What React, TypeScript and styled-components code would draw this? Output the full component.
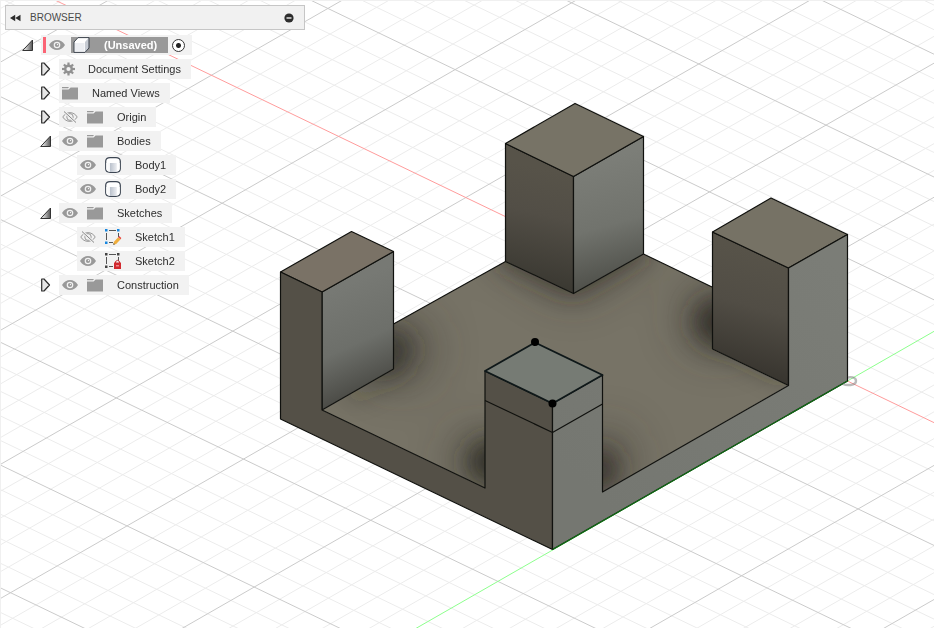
import React, { useState } from "react";
import styled, { createGlobalStyle } from "styled-components";

const GlobalStyle = createGlobalStyle`
  body {
    margin: 0;
    background: #ffffff;
    font-family: "Liberation Sans", Arial, sans-serif;
    font-size: 11px;
    color: #2e2e2e;
  }
  button, input { font: inherit; color: inherit; }
`;

const Workspace = styled.main`
  display: grid;
  height: 100vh;
  box-sizing: border-box;
  border-top: 1px solid #f0f0f0;
  border-left: 1px solid #f0f0f0;
  overflow: hidden;
`;

const Canvas = styled.svg`
  grid-area: 1 / 1;
  width: 100%;
  height: 100%;
  min-height: 0;
  display: block;
`;

const BrowserPanel = styled.aside`
  grid-area: 1 / 1;
  z-index: 1;
  justify-self: start;
  align-self: start;
  width: 300px;
  padding: 4px;
`;

const PanelHeader = styled.header`
  display: flex;
  align-items: center;
  gap: 9px;
  height: 23px;
  padding: 0 10px 0 4px;
  border: 1px solid #c6c6c6;
  background: #f1f1f1;
`;

const PanelTitle = styled.h1`
  flex: 1;
  margin: 0;
  font-size: 10px;
  font-weight: 400;
  color: #4a4a4a;
`;

const IconButton = styled.button`
  display: inline-flex;
  align-items: center;
  flex: none;
  margin: 0;
  padding: 0;
  border: 0;
  background: none;
  cursor: pointer;
`;

const Twisty = styled(IconButton)`
  width: 19px;
`;

const TwistySpace = styled.span`
  flex: none;
  width: 19px;
`;

const Tree = styled.ul<{ $nested?: boolean }>`
  display: flex;
  flex-direction: column;
  gap: 4px;
  margin: ${(p) => (p.$nested ? "4px 0 0 18px" : "5px 0 0 17px")};
  padding: 0;
  list-style: none;
`;

const Row = styled.div`
  display: flex;
  height: 20px;
`;

const Chip = styled.div<{ $root?: boolean }>`
  display: flex;
  align-items: center;
  padding: ${(p) => (p.$root ? "0 7px 0 2px" : "0 10px 0 3px")};
  background: #f2f2f2;
  white-space: nowrap;
`;

const ActiveBar = styled.span`
  width: 3px;
  height: 16px;
  margin-right: 3px;
  background: #fb6475;
`;

const EyeButton = styled(IconButton)`
  width: 25px;
`;

const Label = styled.span<{ $gap: number }>`
  margin-left: ${(p) => p.$gap}px;
`;

const RootLabel = styled.span`
  display: flex;
  align-items: center;
  gap: 14px;
  height: 16px;
  margin: 0 4px 0 -3px;
  padding: 0 11px 0 2px;
  background: #999999;
  color: #ffffff;
  font-weight: 700;
`;

const ActivateRadio = styled.input`
  appearance: none;
  box-sizing: border-box;
  width: 13px;
  height: 13px;
  margin: 0;
  border: 1px solid #333333;
  border-radius: 50%;
  background: radial-gradient(circle, #222222 2px, #ffffff 3px);
`;

function TwistyIcon({ open }: { open: boolean }) {
  return (
    <svg width="12" height="14" viewBox="0 0 12 14" aria-hidden="true">
      <defs>
        <linearGradient id="twistyOpen" x1="0" x2="1">
          <stop offset="0.2" stopColor="#e5e5e5" />
          <stop offset="1" stopColor="#555555" />
        </linearGradient>
      </defs>
      {open ? (
        <path d="M0.7 12.5 L10.5 2 V12.5 Z" fill="url(#twistyOpen)" stroke="#333" />
      ) : (
        <path d="M1.7 1 V13 H4 L9.5 7 L4 1 Z" fill="#e6e6e6" stroke="#2d2d2d" strokeWidth="1.2" strokeLinejoin="round" />
      )}
    </svg>
  );
}

function EyeIcon({ hidden }: { hidden?: boolean }) {
  return (
    <svg width="16" height="12" viewBox="0 0 16 12" aria-hidden="true">
      {hidden ? (
        <g fill="none" stroke="#999999">
          <path d="M0.8 6 C4 0.2 12 0.2 15.2 6 C12 11.8 4 11.8 0.8 6 Z" />
          <ellipse cx="8" cy="6" rx="3.2" ry="3.4" />
          <path d="M2 0.5 L14 11.5" stroke="#f2f2f2" strokeWidth="2.4" />
          <path d="M2 0.5 L14 11.5" stroke="#888888" />
        </g>
      ) : (
        <>
          <path d="M0 6 C4 -0.6 12 -0.6 16 6 C12 12.6 4 12.6 0 6 Z" fill="#999999" />
          <circle cx="8" cy="6" r="3.3" fill="#f2f2f2" />
          <circle cx="8" cy="6" r="2.1" fill="#999999" />
          <circle cx="8.5" cy="5.5" r="0.7" fill="#f2f2f2" />
        </>
      )}
    </svg>
  );
}

function FolderIcon() {
  return (
    <svg width="16" height="14" viewBox="0 0 16 14" aria-hidden="true">
      <path d="M0 1 H7 L6 2.2 H0 Z" fill="#999999" />
      <path d="M0 3.4 H6.6 L8.6 1.6 H16 V13.4 H0 Z" fill="#999999" />
    </svg>
  );
}

const teeth = [0, 45, 90, 135, 180, 225, 270, 315];

function GearIcon() {
  return (
    <svg width="13" height="14" viewBox="0 0 13 14" aria-hidden="true">
      <g fill="#919191">
        {teeth.map((a) => (
          <rect key={a} x="5.4" y="0.5" width="2.2" height="3.5" transform={`rotate(${a} 6.5 7)`} />
        ))}
      </g>
      <circle cx="6.5" cy="7" r="3.3" fill="none" stroke="#919191" strokeWidth="2.4" />
    </svg>
  );
}

function CubeIcon() {
  return (
    <svg width="17" height="16" viewBox="0 0 17 16" aria-hidden="true">
      <path d="M1 5 L5 0.6 H16 V11 L12 15.4 H1 Z" fill="#ffffff" />
      <path d="M12 5 L16 0.6 V11 L12 15.4 Z" fill="#c5cad2" />
      <path d="M2 6 H11.5 V14.5 H2 Z" fill="#eceef2" />
      <path d="M1 5 L5 0.6 H16 V11 L12 15.4 H1 Z" fill="none" stroke="#3d444e" strokeLinejoin="round" />
    </svg>
  );
}

function BodyIcon() {
  return (
    <svg width="16" height="16" viewBox="0 0 16 16" aria-hidden="true">
      <defs>
        <linearGradient id="bodyFill" x1="0" x2="1">
          <stop offset="0" stopColor="#ffffff" />
          <stop offset="0.28" stopColor="#f4f5f7" />
          <stop offset="0.3" stopColor="#bcc3cd" />
          <stop offset="0.75" stopColor="#e8eaee" />
          <stop offset="0.8" stopColor="#ffffff" />
        </linearGradient>
      </defs>
      <path
        d="M0.7 4 Q1 0.7 5 0.7 H11 Q15 0.7 15.3 4 V12 Q15 15.3 11 15.3 H5 Q1 15.3 0.7 12 Z"
        fill="#ffffff"
        stroke="#3d4653"
        strokeWidth="1.2"
      />
      <path d="M1.3 6 H14.7 V12 Q14 14.5 11 14.7 H5 Q1.8 14.5 1.3 12 Z" fill="url(#bodyFill)" />
    </svg>
  );
}

function SketchIcon({ locked }: { locked?: boolean }) {
  const node = locked ? "#444444" : "#1787e0";
  return (
    <svg width="17" height="16" viewBox="0 0 17 16" aria-hidden="true">
      <path d="M4 1.5 H11 M13.5 4 V8 M1.5 4 V11 M4 13.5 H8" fill="none" stroke="#555555" />
      <g fill={node}>
        <rect x="0" y="0" width="2.5" height="2.5" />
        <rect x="12" y="0" width="2.5" height="2.5" />
        <rect x="0" y="12.5" width="2.5" height="2.5" />
      </g>
      {locked ? (
        <>
          <path d="M10.5 10 V8.5 Q12.5 6.2 14.5 8.5 V10" fill="none" stroke="#c5262c" />
          <rect x="9" y="9.5" width="7" height="6.5" fill="#d2292f" />
          <path d="M11 12 H14 V13.5 H11 Z" fill="#f08589" />
        </>
      ) : (
        <>
          <path d="M8.2 15.8 L9 12.8 L13.2 8.2 L15.6 10.2 L11.2 15 Z" fill="#f0ae3c" />
          <path d="M13.2 8.2 L14.2 7 L16.3 9 L15.6 10.2 Z" fill="#e8413c" />
          <path d="M8.2 15.8 L8.7 14 L10 15.4 Z" fill="#555" />
        </>
      )}
    </svg>
  );
}

type Node = {
  name: string;
  icon: React.ReactNode;
  gap: number;
  eye?: "on" | "off";
  branch?: boolean;
  children?: Node[];
};

const nodes: Node[] = [
  { name: "Document Settings", icon: <GearIcon />, gap: 13, branch: true },
  { name: "Named Views", icon: <FolderIcon />, gap: 14, branch: true },
  { name: "Origin", icon: <FolderIcon />, gap: 14, eye: "off", branch: true },
  {
    name: "Bodies", icon: <FolderIcon />, gap: 14, eye: "on", branch: true,
    children: [
      { name: "Body1", icon: <BodyIcon />, gap: 14, eye: "on" },
      { name: "Body2", icon: <BodyIcon />, gap: 14, eye: "on" },
    ],
  },
  {
    name: "Sketches", icon: <FolderIcon />, gap: 14, eye: "on", branch: true,
    children: [
      { name: "Sketch1", icon: <SketchIcon />, gap: 13, eye: "off" },
      { name: "Sketch2", icon: <SketchIcon locked />, gap: 13, eye: "on" },
    ],
  },
  { name: "Construction", icon: <FolderIcon />, gap: 14, eye: "on", branch: true },
];

function TreeNode({ node }: { node: Node }) {
  const [open, setOpen] = useState(!!node.children);
  const [shown, setShown] = useState(node.eye === "on");
  return (
    <li>
      <Row>
        {node.branch ? (
          <Twisty aria-label={`Expand ${node.name}`} aria-expanded={open} onClick={() => setOpen(!open)}>
            <TwistyIcon open={open} />
          </Twisty>
        ) : (
          <TwistySpace />
        )}
        <Chip>
          {node.eye && (
            <EyeButton aria-label={`Show ${node.name}`} aria-pressed={shown} onClick={() => setShown(!shown)}>
              <EyeIcon hidden={!shown} />
            </EyeButton>
          )}
          {node.icon}
          <Label $gap={node.gap}>{node.name}</Label>
        </Chip>
      </Row>
      {open && node.children && (
        <Tree $nested>
          {node.children.map((c) => <TreeNode key={c.name} node={c} />)}
        </Tree>
      )}
    </li>
  );
}

// Ground plane: the origin and the two vectors that span one major cell.
const ORIGIN = [847.4, 381];
const U = [127.2, 61.15];
const V = [116.5, -66.8];
const DIVISIONS = 5;

function gridLine(i: number, along: number[], across: number[]) {
  const t = i / DIVISIONS;
  const x = ORIGIN[0] + across[0] * t;
  const y = ORIGIN[1] + across[1] * t;
  return `M${x - along[0] * 16} ${y - along[1] * 16}L${x + along[0] * 16} ${y + along[1] * 16}`;
}

const indices = Array.from({ length: 121 }, (_, i) => i - 60);
const isMajor = (i: number) => i % DIVISIONS === 0;
const linesFor = (list: number[]) => list.map((i) => gridLine(i, U, V) + gridLine(i, V, U)).join("");
const MINOR = linesFor(indices.filter((i) => !isMajor(i)));
const MAJOR = linesFor(indices.filter((i) => isMajor(i) && i !== 0));

const FLOOR = "393.5,324 505.5,261.5 573.5,293.5 643.5,254 712,287 712,349 788,385.5 603,492 603,375 485,371 485,488 322,410 393.5,369";

function Model() {
  return (
    <Canvas viewBox="1 1 933 627" preserveAspectRatio="xMidYMid slice" role="img" aria-label="Model view">
      <defs>
        <clipPath id="floorClip"><polygon points={FLOOR} /></clipPath>
        <filter id="soft" x="-80%" y="-80%" width="260%" height="260%"><feGaussianBlur stdDeviation="12" /></filter>
        <filter id="wide" x="-100%" y="-100%" width="300%" height="300%"><feGaussianBlur stdDeviation="24" /></filter>
        <linearGradient id="leftInner" gradientUnits="userSpaceOnUse" x1="335" y1="290" x2="378" y2="385">
          <stop offset="0" stopColor="#777974" />
          <stop offset="0.55" stopColor="#6d6f6a" />
          <stop offset="1" stopColor="#4b4b46" />
        </linearGradient>
        <linearGradient id="backLeft" gradientUnits="userSpaceOnUse" x1="550" y1="170" x2="525" y2="280">
          <stop offset="0" stopColor="#575349" />
          <stop offset="0.4" stopColor="#524e46" />
          <stop offset="1" stopColor="#3b3932" />
        </linearGradient>
        <linearGradient id="backRight" gradientUnits="userSpaceOnUse" x1="600" y1="160" x2="632" y2="274">
          <stop offset="0" stopColor="#7c7e78" />
          <stop offset="0.55" stopColor="#71736d" />
          <stop offset="1" stopColor="#51524c" />
        </linearGradient>
        <linearGradient id="rightLeft" gradientUnits="userSpaceOnUse" x1="765" y1="255" x2="733" y2="368">
          <stop offset="0" stopColor="#575349" />
          <stop offset="0.45" stopColor="#514d45" />
          <stop offset="1" stopColor="#38352f" />
        </linearGradient>
        <linearGradient id="frontRight" gradientUnits="userSpaceOnUse" x1="600" y1="500" x2="820" y2="250">
          <stop offset="0" stopColor="#757771" />
          <stop offset="1" stopColor="#7b7d77" />
        </linearGradient>
      </defs>

      <path d={MINOR} stroke="#ececec" fill="none" />
      <path d={MAJOR} stroke="#cbcbcb" fill="none" />
      <path d={gridLine(0, U, V)} stroke="#ff9c9c" />
      <path d={gridLine(0, V, U)} stroke="#8dff8d" />

      <polygon points={FLOOR} fill="#777366" />
      <g clipPath="url(#floorClip)" fill="#2e2b25">
        <g filter="url(#wide)" opacity="0.4">
          <ellipse cx="400" cy="350" rx="34" ry="34" />
          <path d="M480 240 L573 300 L665 240Z" />
          <ellipse cx="718" cy="318" rx="36" ry="34" />
          <ellipse cx="485" cy="460" rx="34" ry="28" />
          <ellipse cx="603" cy="460" rx="30" ry="30" />
        </g>
        <g filter="url(#soft)">
          <ellipse cx="390" cy="350" rx="22" ry="20" opacity="0.75" />
          <path d="M345 392 L393 362 L406 372 L350 398Z" opacity="0.5" />
          <path d="M500 262 L573 295 L645 254 L645 238 L500 238Z" opacity="0.65" />
          <ellipse cx="718" cy="322" rx="24" ry="23" opacity="0.85" />
          <path d="M708 342 L790 382 L790 360 L715 320Z" opacity="0.5" />
          <ellipse cx="492" cy="462" rx="24" ry="22" opacity="0.9" />
          <ellipse cx="600" cy="470" rx="18" ry="22" opacity="0.8" />
        </g>
      </g>

      <g stroke="#10110e" strokeWidth="1.2" strokeLinejoin="round">
        <polyline points="393.5,324 505.5,261.5" />
        <polyline points="643.5,254 712,287" />

        <polygon points="505.5,143.5 573.5,176.5 573.5,293.5 505.5,261.5" fill="url(#backLeft)" />
        <polygon points="573.5,176.5 643.5,136.5 643.5,254 573.5,293.5" fill="url(#backRight)" />
        <polygon points="505.5,143.5 575,103.5 643.5,136.5 573.5,176.5" fill="#777366" />

        <polygon points="712.5,232 788.5,268 788.5,385.5 712.5,349" fill="url(#rightLeft)" />
        <polygon points="712.5,232 771,198 847.5,234.5 788.5,268" fill="#767265" />

        <polygon points="322,292 393.5,251.5 393.5,369 322,410" fill="url(#leftInner)" />
        <polygon points="280.5,272 351.5,231.5 393.5,251.5 322,292" fill="#7a7266" />

        <polygon
          points="280.5,272 322,292 322,410 485,488 485,371 552.5,403.5 552.5,549.5 280.5,419"
          fill="#545047"
        />
        <polygon
          points="552.5,403.5 602.5,375 602.5,492 788.5,385.5 788.5,268 847.5,234.5 847.5,381 552.5,549.5"
          fill="url(#frontRight)"
        />
        <polyline points="485,400.5 552.5,432.5 602.5,404" fill="none" />
        <polygon points="485,371 535,342.5 602.5,375 552.5,403.5" fill="#767b74" stroke="#0f1819" strokeWidth="1.8" />
      </g>
      <path d="M552.5 549.5 L847.5 381" stroke="#126b16" strokeWidth="1.2" />
      <circle cx="535" cy="342" r="4" fill="#000000" />
      <circle cx="552.5" cy="403.5" r="4" fill="#000000" />
      <path
        d="M843 384 C846 385.5 856 386 856 381 C856 376.5 850 377 848 377.5"
        fill="none"
        stroke="#777777"
        strokeOpacity="0.5"
        strokeWidth="2.4"
      />
    </Canvas>
  );
}

export default function App() {
  const [open, setOpen] = useState(true);
  const [shown, setShown] = useState(true);
  return (
    <>
      <GlobalStyle />
      <Workspace>
        <Model />
        <BrowserPanel>
          <PanelHeader>
            <IconButton aria-label="Collapse panel">
              <svg width="11" height="8" viewBox="0 0 11 8" aria-hidden="true">
                <path d="M5.2 0.8 V7.2 L0 4 Z M10.5 0.8 V7.2 L5.3 4 Z" fill="#2d2d2d" />
              </svg>
            </IconButton>
            <PanelTitle>BROWSER</PanelTitle>
            <IconButton aria-label="Panel options">
              <svg width="10" height="10" viewBox="0 0 10 10" aria-hidden="true">
                <circle cx="5" cy="5" r="4.6" fill="#2d2d2d" />
                <path d="M2.5 5 H7.5" stroke="#fff" strokeWidth="1.3" />
              </svg>
            </IconButton>
          </PanelHeader>
          <Tree>
            <li>
              <Row>
                <Twisty aria-label="Expand document" aria-expanded={open} onClick={() => setOpen(!open)}>
                  <TwistyIcon open={open} />
                </Twisty>
                <Chip $root>
                  <ActiveBar />
                  <EyeButton aria-label="Show document" aria-pressed={shown} onClick={() => setShown(!shown)}>
                    <EyeIcon hidden={!shown} />
                  </EyeButton>
                  <RootLabel>
                    <CubeIcon />
                    (Unsaved)
                  </RootLabel>
                  <ActivateRadio type="radio" aria-label="Activate document" defaultChecked />
                </Chip>
              </Row>
              {open && (
                <Tree $nested>
                  {nodes.map((n) => <TreeNode key={n.name} node={n} />)}
                </Tree>
              )}
            </li>
          </Tree>
        </BrowserPanel>
      </Workspace>
    </>
  );
}
